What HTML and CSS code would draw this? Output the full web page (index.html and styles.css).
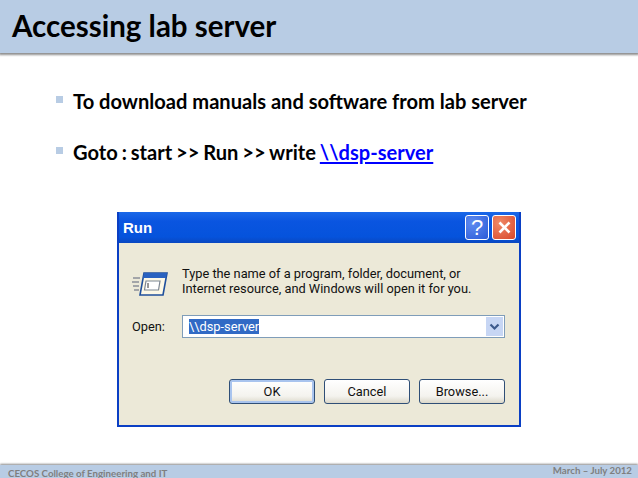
FILE: index.html

```html
<!DOCTYPE html>
<html lang="en">
<head>
  <meta charset="UTF-8" />
  <title>Accessing lab server</title>
  <link rel="stylesheet" href="styles.css">
</head>
<body>
  <div class="slide">
    <header class="slide-head">
      <h1>Accessing lab server</h1>
    </header>
    <ul class="points">
      <li>To download manuals and software from lab server</li>
      <li class="tight">Goto : start &gt;&gt; Run &gt;&gt; write <a href="#">\\dsp-server</a></li>
    </ul>
    <div class="run-dialog">
      <div class="titlebar">
        <span class="titlebar-name">Run</span>
        <span class="win-btn win-help">?</span>
        <span class="win-btn win-close">
          <svg width="15" height="15" viewBox="0 0 15 15"><path d="M2.5 2.5 12.5 12.5M12.5 2.5 2.5 12.5" stroke="#fff" stroke-width="2.6" fill="none"/></svg>
        </span>
      </div>
      <div class="dialog-body">
        <div class="intro">
          <svg class="run-icon" width="36" height="26" viewBox="0 0 36 26">
            <path d="M1 7h7M0 11h7M1 15h6M2 19h5" stroke="#8a8f98" stroke-width="1.4" fill="none"/>
            <path d="M12 2h23l-4 22H8z" fill="#fdf8e6" stroke="#1f4f9c" stroke-width="1.6"/>
            <path d="M12 2h23l-1 5H11z" fill="#2a62c0"/>
            <path d="M14 10h14l-1.5 9H12.500z" fill="#fff" stroke="#7d8794" stroke-width="1.2"/>
            <path d="M16 12v5" stroke="#333" stroke-width="1"/>
          </svg>
          <p>Type the name of a program, folder, document, or<br>Internet resource, and Windows will open it for you.</p>
        </div>
        <div class="open-row">
          <label>Open:</label>
          <div class="combo">
            <span class="combo-text">\\dsp-server</span>
            <span class="combo-arrow">
              <svg width="11" height="8" viewBox="0 0 11 8"><path d="M1.500 1.500 5.500 5.500 9.500 1.500" stroke="#3d5a8c" stroke-width="2.200" fill="none"/></svg>
            </span>
          </div>
        </div>
        <div class="buttons">
          <span class="xp-btn xp-default">OK</span>
          <span class="xp-btn">Cancel</span>
          <span class="xp-btn">Browse...</span>
        </div>
      </div>
    </div>
    <footer class="slide-foot">
      <span class="foot-left">CECOS College of Engineering and IT</span>
      <span class="foot-right">March – July 2012</span>
    </footer>
  </div>
</body>
</html>
```

FILE: styles.css

```css
html, body {
  margin: 0;
  padding: 0;
  background: #fff;
}
.slide {
  width: 638px;
  height: 478px;
  display: flex;
  flex-direction: column;
  overflow: hidden;
  font-family: Lato, "Open Sans", sans-serif;
  color: #000;
}
.slide-head {
  height: 50px;
  flex: none;
  padding: 0 0 3px 12px;
  background: #b8cce4;
  box-shadow: 0 1px 2px 1px #8f8f8f;
  display: flex;
  align-items: center;
}
.slide-head h1 {
  margin: 0;
  font-size: 29.5px;
  font-weight: 700;
}
.points {
  list-style: none;
  margin: 35px 0 0;
  padding: 0 0 0 56px;
}
.points li {
  position: relative;
  padding-left: 17px;
  height: 26px;
  line-height: 26px;
  margin-bottom: 25px;
  font-size: 20.1px;
  font-weight: 700;
}
.points li::before {
  content: "";
  position: absolute;
  left: 0;
  top: 8px;
  width: 7px;
  height: 7px;
  background: #b8cce4;
}
.points .tight {
  word-spacing: -1px;
}
.points a {
  color: #0000ff;
}
.run-dialog {
  width: 404px;
  height: 215px;
  margin: 22px 0 0 117px;
  flex: none;
  box-sizing: border-box;
  background: #0a3fc4;
  padding: 0 2px 2px;
  display: flex;
  flex-direction: column;
  font-family: Roboto, sans-serif;
}
.titlebar {
  height: 31px;
  flex: none;
  display: flex;
  align-items: center;
  gap: 3px;
  padding-right: 3px;
  background: linear-gradient(#1a68e8, #0a55e0 30%, #0553dc 80%, #0a47c0);
}
.titlebar-name {
  flex: 1;
  padding-left: 4px;
  font-family: "Liberation Sans", sans-serif;
  font-size: 15px;
  font-weight: 700;
  color: #fff;
}
.win-btn {
  width: 24px;
  height: 25px;
  box-sizing: border-box;
  border: 1px solid #fff;
  border-radius: 3px;
  display: flex;
  align-items: center;
  justify-content: center;
  color: #fff;
}
.win-help {
  background: radial-gradient(circle at 30% 30%, #5f8cf0, #2a5ad8);
  font-family: "Liberation Sans", sans-serif;
  font-size: 22px;
}
.win-close {
  background: radial-gradient(circle at 30% 30%, #f08a68, #d8472a);
}
.dialog-body {
  flex: 1;
  background: #ece9d8;
  display: flex;
  flex-direction: column;
  font-size: 12.8px;
  color: #111;
}
.intro {
  display: flex;
  align-items: flex-start;
  padding: 23px 0 0 13px;
  height: 49px;
}
.run-icon {
  width: 36px;
  flex: none;
  margin-top: 5px;
}
.intro p {
  margin: 0 0 0 14px;
  white-space: nowrap;
  line-height: 15px;
}
.open-row {
  display: flex;
  align-items: center;
  padding-left: 13px;
}
.open-row label {
  width: 50px;
}
.combo {
  width: 323px;
  height: 23px;
  box-sizing: border-box;
  border: 1px solid #7f9db9;
  background: #fff;
  display: flex;
  align-items: center;
  padding: 0 1px 0 6px;
}
.combo-text {
  background: #316ac5;
  color: #fff;
  line-height: 15px;
}
.combo-arrow {
  margin-left: auto;
  width: 17px;
  height: 19px;
  background: #c7d6f4;
  display: flex;
  align-items: center;
  justify-content: center;
}
.buttons {
  display: flex;
  gap: 9px;
  margin-top: 41px;
  padding-left: 110px;
}
.xp-btn {
  width: 86px;
  height: 25px;
  box-sizing: border-box;
  border: 1px solid #2f4f77;
  border-radius: 3px;
  background: linear-gradient(#fff, #f4f3ee 70%, #dcd8ca);
  display: flex;
  align-items: center;
  justify-content: center;
}
.xp-default {
  box-shadow: inset 0 0 0 2px #a9c4ee;
}
.slide-foot {
  margin-top: auto;
  height: 13px;
  flex: none;
  background: #b8cce4;
  box-shadow: 0 -1px 2px #8a8a8a;
  display: flex;
  justify-content: space-between;
  padding: 0 6px 0 8px;
  font-size: 9.7px;
  font-weight: 700;
  color: #7f7f7f;
}
.foot-left {
  line-height: 16px;
}
.foot-right {
  line-height: 10px;
}
```
